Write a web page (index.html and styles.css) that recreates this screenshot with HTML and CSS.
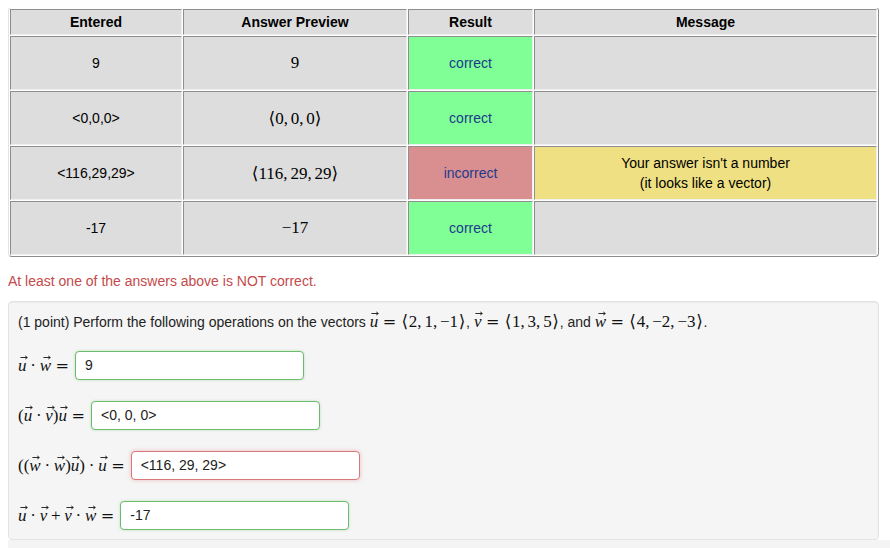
FILE: index.html
```html
<!DOCTYPE html>
<html>
<head>
<meta charset="utf-8">
<link rel="stylesheet" href="styles.css">
</head>
<body>
<div class="page">
  <table class="results">
    <colgroup><col class="w1"><col class="w2"><col class="w3"><col class="w4"></colgroup>
    <tr class="head"><th>Entered</th><th>Answer Preview</th><th>Result</th><th>Message</th></tr>
    <tr><td>9</td><td class="mathcell"><span class="mn">9</span></td><td class="ok">correct</td><td></td></tr>
    <tr><td>&lt;0,0,0&gt;</td><td class="mathcell"><span class="br">⟨</span>0,<span class="th"></span>0,<span class="th"></span>0<span class="br">⟩</span></td><td class="ok">correct</td><td></td></tr>
    <tr><td>&lt;116,29,29&gt;</td><td class="mathcell"><span class="br">⟨</span>116,<span class="th"></span>29,<span class="th"></span>29<span class="br">⟩</span></td><td class="bad">incorrect</td><td class="msg">Your answer isn't a number<br>(it looks like a vector)</td></tr>
    <tr><td>-17</td><td class="mathcell">−17</td><td class="ok">correct</td><td></td></tr>
  </table>

  <div class="alert">At least one of the answers above is NOT correct.</div>

  <div class="well">
    <p class="problem">(1 point) Perform the following operations on the vectors <span class="m"><span class="vec">u<svg class="arr" viewBox="0 0 10 5"><path d="M0.5 2.5H8.8M6.6 0.6L9.2 2.5L6.6 4.4"/></svg></span><span class="rel">=</span><span class="br">⟨</span>2,<span class="th"></span>1,<span class="th"></span>−1<span class="br">⟩</span></span>, <span class="m"><span class="vec">v<svg class="arr" viewBox="0 0 10 5"><path d="M0.5 2.5H8.8M6.6 0.6L9.2 2.5L6.6 4.4"/></svg></span><span class="rel">=</span><span class="br">⟨</span>1,<span class="th"></span>3,<span class="th"></span>5<span class="br">⟩</span></span>, and <span class="m"><span class="vec w">w<svg class="arr" viewBox="0 0 10 5"><path d="M0.5 2.5H8.8M6.6 0.6L9.2 2.5L6.6 4.4"/></svg></span><span class="rel">=</span><span class="br">⟨</span>4,<span class="th"></span>−2,<span class="th"></span>−3<span class="br">⟩</span></span>.</p>

    <div class="qrow">
      <span class="m"><span class="vec">u<svg class="arr" viewBox="0 0 10 5"><path d="M0.5 2.5H8.8M6.6 0.6L9.2 2.5L6.6 4.4"/></svg></span><span class="bin">·</span><span class="vec w">w<svg class="arr" viewBox="0 0 10 5"><path d="M0.5 2.5H8.8M6.6 0.6L9.2 2.5L6.6 4.4"/></svg></span><span class="rel last">=</span></span>
      <div class="field good">9</div>
    </div>
    <div class="qrow">
      <span class="m">(<span class="vec">u<svg class="arr" viewBox="0 0 10 5"><path d="M0.5 2.5H8.8M6.6 0.6L9.2 2.5L6.6 4.4"/></svg></span><span class="bin">·</span><span class="vec">v<svg class="arr" viewBox="0 0 10 5"><path d="M0.5 2.5H8.8M6.6 0.6L9.2 2.5L6.6 4.4"/></svg></span>)<span class="vec">u<svg class="arr" viewBox="0 0 10 5"><path d="M0.5 2.5H8.8M6.6 0.6L9.2 2.5L6.6 4.4"/></svg></span><span class="rel last">=</span></span>
      <div class="field good">&lt;0, 0, 0&gt;</div>
    </div>
    <div class="qrow">
      <span class="m">((<span class="vec w">w<svg class="arr" viewBox="0 0 10 5"><path d="M0.5 2.5H8.8M6.6 0.6L9.2 2.5L6.6 4.4"/></svg></span><span class="bin">·</span><span class="vec w">w<svg class="arr" viewBox="0 0 10 5"><path d="M0.5 2.5H8.8M6.6 0.6L9.2 2.5L6.6 4.4"/></svg></span>)<span class="vec">u<svg class="arr" viewBox="0 0 10 5"><path d="M0.5 2.5H8.8M6.6 0.6L9.2 2.5L6.6 4.4"/></svg></span>)<span class="bin">·</span><span class="vec">u<svg class="arr" viewBox="0 0 10 5"><path d="M0.5 2.5H8.8M6.6 0.6L9.2 2.5L6.6 4.4"/></svg></span><span class="rel last">=</span></span>
      <div class="field wrong">&lt;116, 29, 29&gt;</div>
    </div>
    <div class="qrow">
      <span class="m"><span class="vec">u<svg class="arr" viewBox="0 0 10 5"><path d="M0.5 2.5H8.8M6.6 0.6L9.2 2.5L6.6 4.4"/></svg></span><span class="bin">·</span><span class="vec">v<svg class="arr" viewBox="0 0 10 5"><path d="M0.5 2.5H8.8M6.6 0.6L9.2 2.5L6.6 4.4"/></svg></span><span class="bin">+</span><span class="vec">v<svg class="arr" viewBox="0 0 10 5"><path d="M0.5 2.5H8.8M6.6 0.6L9.2 2.5L6.6 4.4"/></svg></span><span class="bin">·</span><span class="vec w">w<svg class="arr" viewBox="0 0 10 5"><path d="M0.5 2.5H8.8M6.6 0.6L9.2 2.5L6.6 4.4"/></svg></span><span class="rel last">=</span></span>
      <div class="field good">-17</div>
    </div>
  </div>
</div>
<div class="strip"></div>
</body>
</html>
```

FILE: styles.css
```css
html, body { background: #fff; }
body {
  margin: 8px 0 0 8px;
  font-family: "Liberation Sans", Arial, sans-serif;
  font-size: 14px;
  color: #000;
}
.page { width: 871px; }

table.results {
  width: 871px;
  table-layout: fixed;
  border-collapse: separate;
  border-spacing: 1px;
  border: 1px solid;
  border-color: #e4e4e4 #8c8c8c #8c8c8c #e4e4e4;
  border-radius: 4px;
  margin-top: -1px;
}
col.w1 { width: 172px; }
col.w2 { width: 224px; }
col.w3 { width: 125px; }
col.w4 { width: 343px; }

th, td {
  background: #dddddd;
  border: 1px solid;
  border-color: #8e8e8e #efefef #efefef #8e8e8e;
  text-align: center;
  vertical-align: middle;
  padding: 0;
  box-sizing: border-box;
  line-height: 20px;
}
tr.head th { height: 26px; font-weight: bold; }
tr:not(.head) td { height: 54px; }
td.ok { background: #7fff95; color: #1d3a8c; }
td.bad { background: #d98f90; color: #1d3a8c; }
td.msg { background: #eee083; }

.mathcell {
  font-family: "Liberation Serif", "Times New Roman", serif;
  font-size: 17px;
}
.br { font-family: "DejaVu Serif", "DejaVu Sans", serif; font-size: 1em; }
.m .br { padding: 0 0.7px; }
.th { display: inline-block; width: 0.167em; }

.alert {
  margin-top: 14px;
  line-height: 20px;
  color: #c44a4b;
}

.well {
  margin-top: 10px;
  background: #f5f5f5;
  border: 1px solid #e3e3e3;
  border-radius: 4px;
  box-shadow: inset 0 1px 1px rgba(0,0,0,0.05);
  padding: 9px 9px 9px 9px;
  color: #222;
}
.problem { margin: 0; line-height: 20px; }

.m {
  font-family: "Liberation Serif", "Times New Roman", serif;
  font-size: 17px;
  color: #111;
  white-space: nowrap;
}
.vec {
  position: relative;
  display: inline-block;
  font-style: italic;
  line-height: 1;
}
.vec .arr {
  position: absolute;
  left: 1.5px;
  top: -2px;
  width: 8px;
  height: 5px;
  fill: none;
  stroke: #111;
  stroke-width: 1.1;
}
.vec.w .arr { left: 3px; }
.rel { margin: 0 0.28em; font-family: "DejaVu Serif", serif; font-size: 0.95em; }
.rel.last { margin-right: 0; }
.bin { margin: 0 0.22em; }

.qrow {
  display: flex;
  align-items: center;
  gap: 6px;
  margin-top: 21px;
}
.qrow:first-of-type { margin-top: 19px; }
.field {
  box-sizing: border-box;
  width: 229px;
  height: 29px;
  background: #fff;
  border: 1px solid #6dbb6d;
  border-radius: 4px;
  padding: 0 9px;
  line-height: 27px;
  font-size: 14px;
  color: #222;
  font-family: "Liberation Sans", Arial, sans-serif;
}
.field.good { box-shadow: 0 0 3px rgba(92,184,92,0.35); }
.field.wrong { border-color: #d9787b; box-shadow: 0 0 4px rgba(217,83,79,0.35); }

.strip {
  margin-top: 0;
  height: 20px;
  background: #f4f4f4;
}
```
